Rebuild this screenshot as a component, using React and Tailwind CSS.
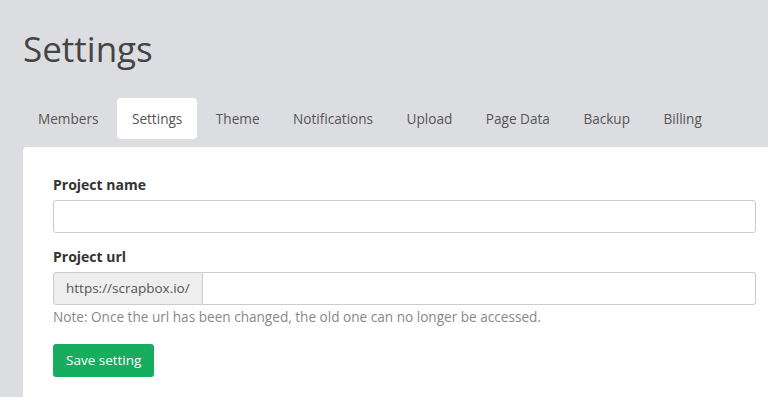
const tabs = ["Members", "Settings", "Theme", "Notifications", "Upload", "Page Data", "Backup", "Billing"];

function App() {
  return (
    <div
      className="min-h-screen w-full overflow-hidden bg-[#dcdde1] pl-[23px] pt-[25px]"
      style={{ fontFamily: '"Open Sans", "Liberation Sans", sans-serif' }}
    >
      <h1 className="text-[35px] leading-[48px] font-normal text-[#444]">Settings</h1>

      <nav className="mt-[25px] flex gap-[3.5px]">
        {tabs.map((tab) => (
          <div
            key={tab}
            className={
              tab === "Settings"
                ? "h-[41px] rounded-[4px] bg-white px-[15px] text-[13.6px] leading-[41px] text-[#555]"
                : "h-[41px] px-[15px] text-[13.6px] leading-[41px] text-[#555]"
            }
          >
            {tab}
          </div>
        ))}
      </nav>

      <div className="mt-[8px] w-[763px] rounded-tl-[4px] bg-white px-[30px] pt-[28px] pb-[30px]">
        <label className="block text-[14px] leading-[20px] font-bold text-[#333]">Project name</label>
        <input
          type="text"
          className="mt-[5px] block h-[33px] w-full rounded-[3px] border border-[#ccc] px-[12px] text-[13px] outline-none"
        />

        <label className="mt-[14px] block text-[14px] leading-[20px] font-bold text-[#333]">Project url</label>
        <div className="mt-[5px] flex h-[33px] w-full">
          <span className="flex items-center rounded-l-[3px] border border-[#ccc] bg-[#eee] px-[12px] text-[13.5px] text-[#555]">
            https://scrapbox.io/
          </span>
          <input
            type="text"
            className="h-full flex-1 rounded-r-[3px] border border-l-0 border-[#ccc] px-[12px] text-[13px] outline-none"
          />
        </div>
        <p className="mt-[3px] text-[13.6px] leading-[18px] text-[#888]">
          Note: Once the url has been changed, the old one can no longer be accessed.
        </p>

        <button
          type="button"
          className="mt-[18px] h-[33px] rounded-[3px] bg-[#17ad5f] px-[13px] text-[13.5px] text-white"
        >
          Save setting
        </button>
      </div>
    </div>
  );
}

export default App;
